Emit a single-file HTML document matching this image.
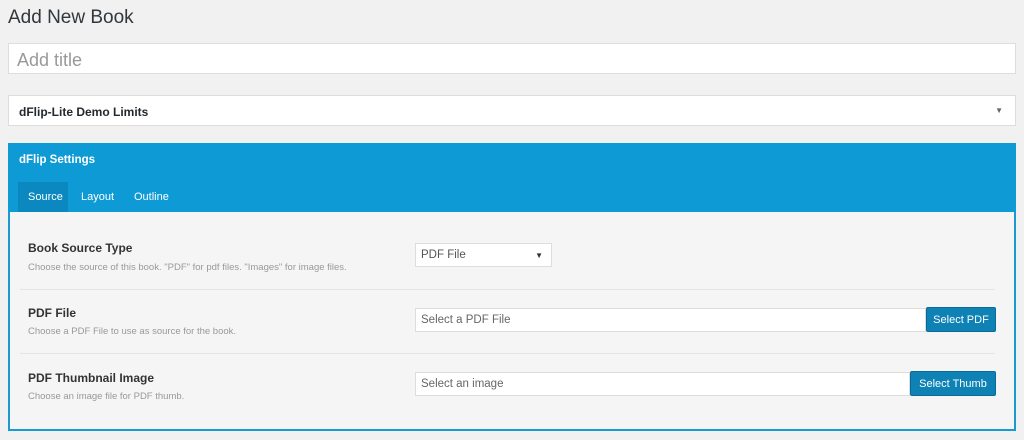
<!DOCTYPE html>
<html><head><style>
*{box-sizing:border-box;margin:0;padding:0}
body{width:1024px;height:440px;background:#f1f1f1;font-family:"Liberation Sans",sans-serif;position:relative;overflow:hidden;color:#23282d}
.a{position:absolute}
h1{position:absolute;left:8px;top:7px;font-size:19px;font-weight:400;color:#32373c}
.box{background:#fff;border:1px solid #ddd}
.lbl{font-size:12px;font-weight:bold;color:#333;left:28px}
.desc{font-size:9.5px;color:#999;left:28px}
.inp{background:#fff;border:1px solid #ddd;font-size:11.5px;color:#555;padding-left:5px;line-height:23px}
.btn{background:#0e82b5;border:1px solid #0a6b96;border-radius:2px;color:#fff;font-size:11px;text-align:center;line-height:24px}
.sep{left:8px;width:987px;height:1px;background:#e4e4e4}
</style></head><body>
<h1>Add New Book</h1>
<div class="a box" style="left:8px;top:43px;width:1008px;height:31px;font-size:18px;color:#999;padding:6px 0 0 8px">Add title</div>
<div class="a box" style="left:8px;top:95px;width:1008px;height:31px;font-size:12px;font-weight:bold;padding:9px 0 0 10px;color:#23282d">dFlip-Lite Demo Limits<span style="position:absolute;right:12px;top:10px;font-size:8px;color:#666">▼</span></div>
<div class="a" style="left:8px;top:143px;width:1008px;height:288px;background:#f5f5f5;border:2px solid #1a9bd0;border-top:none"></div>
<div class="a" style="left:8px;top:143px;width:1008px;height:69px;background:#0e9bd5"></div>
<div class="a" style="left:19px;top:154px;color:#fff;font-size:11.5px;font-weight:bold">dFlip Settings</div>
<div class="a" style="left:18px;top:182px;width:50px;height:30px;background:#0b88bf"></div>
<div class="a" style="left:28px;top:191px;color:#fff;font-size:11px">Source</div>
<div class="a" style="left:81px;top:191px;color:#fff;font-size:11px">Layout</div>
<div class="a" style="left:134px;top:191px;color:#fff;font-size:11px">Outline</div>

<div class="a lbl" style="top:241px">Book Source Type</div>
<div class="a desc" style="top:262px">Choose the source of this book. "PDF" for pdf files. "Images" for image files.</div>
<div class="a inp" style="left:415px;top:243px;width:137px;height:24px">PDF File<span style="position:absolute;right:8px;top:0;font-size:8px;color:#333">▼</span></div>
<div class="a sep" style="left:20px;top:289px;width:975px"></div>

<div class="a lbl" style="top:306px">PDF File</div>
<div class="a desc" style="top:326px">Choose a PDF File to use as source for the book.</div>
<div class="a inp" style="left:415px;top:308px;width:511px;height:24px;color:#666">Select a PDF File</div>
<div class="a btn" style="left:926px;top:307px;width:70px;height:25px">Select PDF</div>
<div class="a sep" style="left:20px;top:353px;width:975px"></div>

<div class="a lbl" style="top:371px">PDF Thumbnail Image</div>
<div class="a desc" style="top:391px">Choose an image file for PDF thumb.</div>
<div class="a inp" style="left:415px;top:372px;width:495px;height:24px;color:#666">Select an image</div>
<div class="a btn" style="left:910px;top:371px;width:86px;height:25px">Select Thumb</div>
</body></html>
